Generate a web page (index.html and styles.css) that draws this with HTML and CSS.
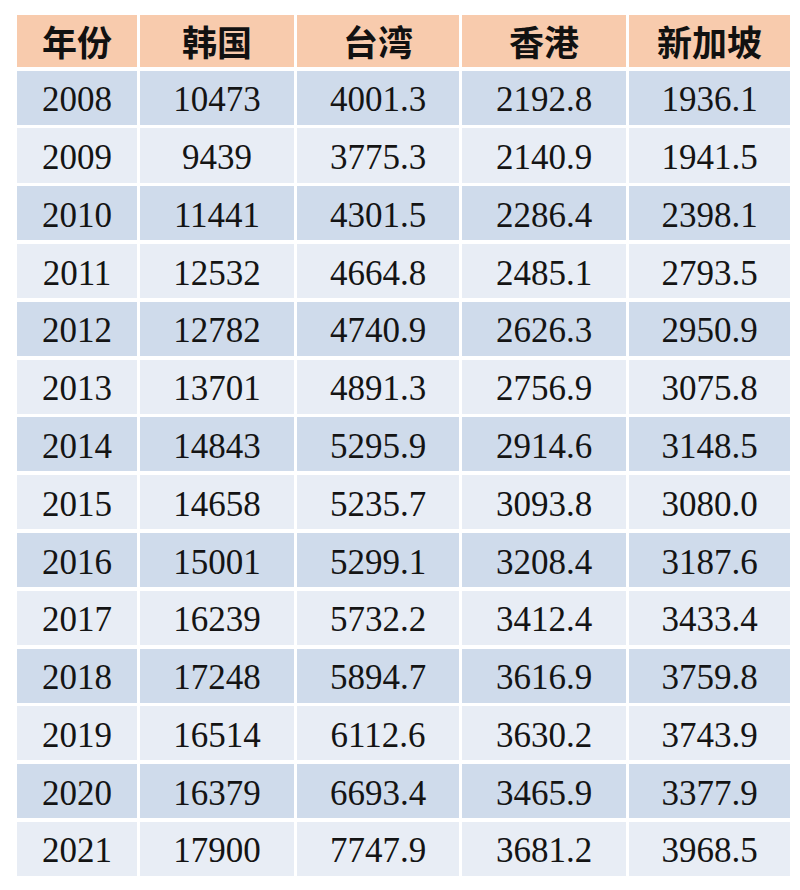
FILE: index.html
```html
<!DOCTYPE html>
<html lang="zh-CN">
<head>
<meta charset="utf-8">
<title>年份数据表</title>
<link rel="stylesheet" href="styles.css">
</head>
<body>
<div class="grid">
  <div class="cell head">年份</div><div class="cell head">韩国</div><div class="cell head">台湾</div><div class="cell head">香港</div><div class="cell head">新加坡</div>

  <div class="cell dark">2008</div><div class="cell dark">10473</div><div class="cell dark">4001.3</div><div class="cell dark">2192.8</div><div class="cell dark">1936.1</div>
  <div class="cell light">2009</div><div class="cell light">9439</div><div class="cell light">3775.3</div><div class="cell light">2140.9</div><div class="cell light">1941.5</div>
  <div class="cell dark">2010</div><div class="cell dark">11441</div><div class="cell dark">4301.5</div><div class="cell dark">2286.4</div><div class="cell dark">2398.1</div>
  <div class="cell light">2011</div><div class="cell light">12532</div><div class="cell light">4664.8</div><div class="cell light">2485.1</div><div class="cell light">2793.5</div>
  <div class="cell dark">2012</div><div class="cell dark">12782</div><div class="cell dark">4740.9</div><div class="cell dark">2626.3</div><div class="cell dark">2950.9</div>
  <div class="cell light">2013</div><div class="cell light">13701</div><div class="cell light">4891.3</div><div class="cell light">2756.9</div><div class="cell light">3075.8</div>
  <div class="cell dark">2014</div><div class="cell dark">14843</div><div class="cell dark">5295.9</div><div class="cell dark">2914.6</div><div class="cell dark">3148.5</div>
  <div class="cell light">2015</div><div class="cell light">14658</div><div class="cell light">5235.7</div><div class="cell light">3093.8</div><div class="cell light">3080.0</div>
  <div class="cell dark">2016</div><div class="cell dark">15001</div><div class="cell dark">5299.1</div><div class="cell dark">3208.4</div><div class="cell dark">3187.6</div>
  <div class="cell light">2017</div><div class="cell light">16239</div><div class="cell light">5732.2</div><div class="cell light">3412.4</div><div class="cell light">3433.4</div>
  <div class="cell dark">2018</div><div class="cell dark">17248</div><div class="cell dark">5894.7</div><div class="cell dark">3616.9</div><div class="cell dark">3759.8</div>
  <div class="cell light">2019</div><div class="cell light">16514</div><div class="cell light">6112.6</div><div class="cell light">3630.2</div><div class="cell light">3743.9</div>
  <div class="cell dark">2020</div><div class="cell dark">16379</div><div class="cell dark">6693.4</div><div class="cell dark">3465.9</div><div class="cell dark">3377.9</div>
  <div class="cell light">2021</div><div class="cell light">17900</div><div class="cell light">7747.9</div><div class="cell light">3681.2</div><div class="cell light">3968.5</div>
</div>
</body>
</html>
```

FILE: styles.css
```css
html, body {
  margin: 0;
  padding: 0;
  background: #ffffff;
}

.grid {
  margin: 15px 0 0 17px;
  width: 773px;
  height: 861px;
  display: grid;
  grid-template-columns: 120px 154px 162px 164px 161px;
  grid-template-rows: 52px repeat(14, 1fr);
  column-gap: 3px;
  row-gap: 3.7px;
}

.cell {
  display: flex;
  align-items: center;
  justify-content: center;
  font-family: "Liberation Serif", "Times New Roman", serif;
  font-size: 35px;
  color: #141414;
  padding-top: 5px;
}

.head {
  background: #f8cbad;
  font-family: "Noto Sans CJK SC", "Noto Sans", sans-serif;
  font-weight: 700;
  font-size: 35px;
  color: #111111;
  padding-top: 0;
  padding-bottom: 2px;
}

.dark {
  background: #cfdbeb;
}

.light {
  background: #e8edf5;
}
```
